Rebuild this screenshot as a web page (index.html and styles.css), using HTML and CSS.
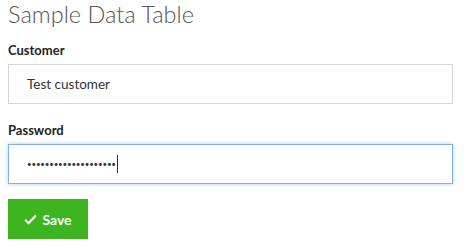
FILE: index.html
```html
<!DOCTYPE html>
<html>
<head>
<meta charset="utf-8">
<link rel="stylesheet" href="styles.css">
</head>
<body>
<div class="page">
  <h1 class="title">Sample Data Table</h1>
  <div class="field">
    <label class="label">Customer</label>
    <div class="input">Test customer</div>
  </div>
  <div class="field">
    <label class="label">Password</label>
    <div class="input focus"><span class="dots">••••••••••••••••••••</span><span class="caret"></span></div>
  </div>
  <button class="btn"><svg class="check" width="13" height="11" viewBox="0 0 13 11"><path d="M1.2 5.8 L4.6 9.2 L11.8 1.6" fill="none" stroke="#fff" stroke-width="2.2"/></svg>Save</button>
</div>
</body>
</html>
```
FILE: styles.css
```css
html, body { margin: 0; padding: 0; background: #fff; }
.page {
  font-family: Lato, "Open Sans", sans-serif;
  padding: 0 8px;
  width: 445px;
  display: flex;
  flex-direction: column;
}
.title {
  font-weight: 300;
  font-size: 23.5px;
  color: #555;
  margin: 0;
  line-height: 29px;
  height: 29px;
}
.field { display: flex; flex-direction: column; }
.label {
  font-weight: 700;
  font-size: 13px;
  color: #222;
  line-height: 16px;
  margin-top: 13px;
  margin-bottom: 6px;
}
.field + .field .label { margin-top: 18px; }
.input {
  box-sizing: border-box;
  height: 40px;
  border: 1px solid #d6d6d6;
  display: flex;
  align-items: center;
  padding-left: 18px;
  font-size: 13.5px;
  color: #333;
}
.input.focus {
  border-color: #80b3e0;
  box-shadow: 0 0 4px rgba(102,175,233,0.6);
}
.dots { font-size: 8px; letter-spacing: -0.2px; color: #333; }
.caret { display: inline-block; width: 1px; height: 18px; background: #333; margin-left: 1px; }
.btn {
  margin-top: 15px;
  width: 80px;
  height: 40px;
  border: none;
  background: #3cb521;
  color: #fff;
  font-family: Lato, sans-serif;
  font-size: 14px;
  font-weight: 700;
  display: flex;
  align-items: center;
  justify-content: center;
  gap: 5px;
  padding: 0;
}
```
